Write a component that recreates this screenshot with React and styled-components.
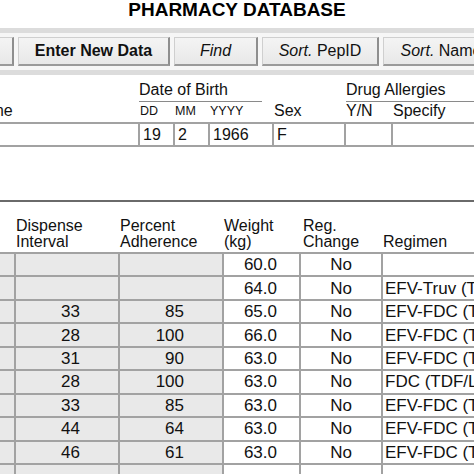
import styled, { createGlobalStyle, css } from 'styled-components';

const GlobalStyle = createGlobalStyle`
	html,
	body {
		margin: 0;
		padding: 0;
		background: #fff;
		overflow: hidden;
	}

	body {
		font-family: 'Liberation Sans', Arial, Helvetica, sans-serif;
		color: #111;
	}
`;

const Page = styled.div`
	width: 474px;
	height: 474px;
	overflow: hidden;
`;

const Title = styled.h1`
	margin: 0;
	font-size: 19px;
	line-height: 20px;
	font-weight: 700;
	text-align: center;
	color: #000;
`;

/* toolbar with the grey strips above and below */
const Toolbar = styled.nav`
	display: flex;
	gap: 4px;
	margin-top: 8px;
	padding: 4px 0;
	background: #f6f6f6;
	border-top: 5px solid #dcdcdc;
	border-bottom: 5px solid #dcdcdc;
	white-space: nowrap;
`;

const ToolButton = styled.button`
	flex: 0 0 auto;
	box-sizing: border-box;
	width: ${(p) => p.$w}px;
	height: 29px;
	padding: 0;
	font-family: inherit;
	font-size: 16px;
	font-weight: ${(p) => (p.$bold ? 700 : 400)};
	font-style: ${(p) => (p.$italic ? 'italic' : 'normal')};
	color: #111;
	background: linear-gradient(#f4f4f4, #e8e8e8);
	border: 1px solid #cfcfcf;
	border-right: 2px solid #8e8e8e;
	border-bottom: 2px solid #9a9a9a;
	${(p) =>
		p.$cut &&
		css`
			border-left: none;
		`}
`;

const SortLabel = styled.em`
	font-style: italic;
`;

/* patient form */
const formColumns = css`
	display: grid;
	grid-template-columns: 138px 35px 35px 64px 72px 47px 1fr;
`;

const GroupRow = styled.div`
	${formColumns};
	margin-top: 6px;
	height: 21px;
`;

const GroupLabel = styled.div`
	grid-column: ${(p) => p.$span};
	margin: 0 ${(p) => p.$mr || 0}px 0 ${(p) => p.$ml || 0}px;
	padding-bottom: 2px;
	font-size: 16px;
	line-height: 18px;
	border-bottom: 1px solid #8a8a8a;
`;

const LabelRow = styled.div`
	${formColumns};
	height: 20px;
	align-items: end;
`;

const FieldLabel = styled.div`
	padding: 0 0 2px 2px;
	font-size: ${(p) => (p.$small ? 12.5 : 16)}px;
	line-height: 18px;
	white-space: nowrap;
	${(p) =>
		p.$shift &&
		css`
			margin-left: ${p.$shift}px;
			padding-left: 0;
		`}
`;

const ValueRow = styled.div`
	${formColumns};
	border-top: 2px solid #a2a2a2;
	border-bottom: 2px solid #a2a2a2;
`;

const ValueCell = styled.div`
	height: 21px;
	padding-left: 3px;
	font-size: 16px;
	line-height: 21px;
	${(p) =>
		p.$boxed &&
		css`
			border-left: 2px solid #a2a2a2;
		`}
`;

/* dispensing history table */
const History = styled.table`
	margin-top: 53px;
	border-collapse: separate;
	border-spacing: 0;
	table-layout: fixed;
	width: 623px;
	border-top: 2px solid #6a6a6a;
`;

const HeadCell = styled.th`
	height: 47.5px;
	padding: 0 0 2.5px ${(p) => p.$pl || 0}px;
	vertical-align: bottom;
	text-align: left;
	font-size: 16px;
	line-height: 16px;
	font-weight: 400;
	border-bottom: 2px solid #a2a2a2;
`;

const Cell = styled.td`
	height: 21.44px;
	padding: 0 ${(p) => p.$pr || 0}px 0 ${(p) => p.$pl || 0}px;
	font-size: 17px;
	line-height: 21px;
	text-align: ${(p) => p.$align || 'left'};
	white-space: nowrap;
	overflow: hidden;
	background: ${(p) => (p.$shade ? '#e9e9e9' : '#fff')};
	border-right: 2px solid #a2a2a2;
	border-bottom: 2px solid #a2a2a2;
`;

const rows = [
	['', '', '60.0', 'No', ''],
	['', '', '64.0', 'No', 'EFV-Truv (TDF/FTC/EFV)'],
	['33', '85', '65.0', 'No', 'EFV-FDC (TDF/3TC/EFV)'],
	['28', '100', '66.0', 'No', 'EFV-FDC (TDF/3TC/EFV)'],
	['31', '90', '63.0', 'No', 'EFV-FDC (TDF/3TC/EFV)'],
	['28', '100', '63.0', 'No', 'FDC (TDF/Lam/EFV)'],
	['33', '85', '63.0', 'No', 'EFV-FDC (TDF/3TC/EFV)'],
	['44', '64', '63.0', 'No', 'EFV-FDC (TDF/3TC/EFV)'],
	['46', '61', '63.0', 'No', 'EFV-FDC (TDF/3TC/EFV)'],
	['', '', '', '', ''],
];

export default function App() {
	return (
		<Page>
			<GlobalStyle />
			<Title>PHARMACY DATABASE</Title>

			<Toolbar>
				<ToolButton $w={14} $cut aria-label='Back' />
				<ToolButton $w={152} $bold>
					Enter New Data
				</ToolButton>
				<ToolButton $w={84} $italic>
					Find
				</ToolButton>
				<ToolButton $w={117}>
					<SortLabel>Sort.</SortLabel> PepID
				</ToolButton>
				<ToolButton $w={117}>
					<SortLabel>Sort.</SortLabel> Name
				</ToolButton>
			</Toolbar>

			<GroupRow>
				<GroupLabel $span='2 / 5' $ml={1} $mr={10}>
					Date of Birth
				</GroupLabel>
				<GroupLabel $span='6 / 8' $ml={2}>
					Drug Allergies
				</GroupLabel>
			</GroupRow>
			<LabelRow>
				<FieldLabel $shift={-30}>Name</FieldLabel>
				<FieldLabel $small>DD</FieldLabel>
				<FieldLabel $small>MM</FieldLabel>
				<FieldLabel $small>YYYY</FieldLabel>
				<FieldLabel>Sex</FieldLabel>
				<FieldLabel>Y/N</FieldLabel>
				<FieldLabel>Specify</FieldLabel>
			</LabelRow>
			<ValueRow>
				<ValueCell />
				<ValueCell $boxed>19</ValueCell>
				<ValueCell $boxed>2</ValueCell>
				<ValueCell $boxed>1966</ValueCell>
				<ValueCell $boxed>F</ValueCell>
				<ValueCell $boxed />
				<ValueCell $boxed />
			</ValueRow>

			<History>
				<colgroup>
					<col style={{ width: 16 }} />
					<col style={{ width: 104 }} />
					<col style={{ width: 104 }} />
					<col style={{ width: 77 }} />
					<col style={{ width: 82 }} />
					<col style={{ width: 240 }} />
				</colgroup>
				<thead>
					<tr>
						<HeadCell />
						<HeadCell>
							Dispense
							<br />
							Interval
						</HeadCell>
						<HeadCell>
							Percent
							<br />
							Adherence
						</HeadCell>
						<HeadCell>
							Weight
							<br />
							(kg)
						</HeadCell>
						<HeadCell $pl={2}>
							Reg.
							<br />
							Change
						</HeadCell>
						<HeadCell>Regimen</HeadCell>
					</tr>
				</thead>
				<tbody>
					{rows.map((r, i) => (
						<tr key={i}>
							<Cell $shade />
							<Cell $shade $align='right' $pr={38}>
								{r[0]}
							</Cell>
							<Cell $shade $align='right' $pr={38}>
								{r[1]}
							</Cell>
							<Cell $align='right' $pr={22}>
								{r[2]}
							</Cell>
							<Cell $align='center'>{r[3]}</Cell>
							<Cell $pl={2}>{r[4]}</Cell>
						</tr>
					))}
				</tbody>
			</History>
		</Page>
	);
}
